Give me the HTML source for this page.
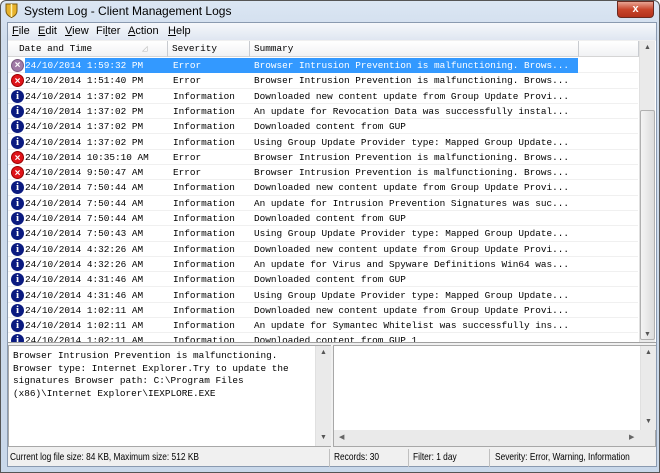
<!DOCTYPE html>
<html><head><meta charset="utf-8">
<style>
*{box-sizing:border-box;margin:0;padding:0}
body{width:660px;height:473px;overflow:hidden;background:#fff;font-family:"Liberation Sans",sans-serif;position:relative}
.frame{position:absolute;left:0;top:0;width:660px;height:473px;background:linear-gradient(#dbe6f3,#cfdcec 40px,#c9d8ea);border:1px solid #555;border-radius:6px 6px 0 0}
.title{position:absolute;left:24px;top:4px;font-size:12px;color:#000}
.close{position:absolute;left:617px;top:1px;width:37px;height:17px;border:1px solid #6b2a20;border-radius:0 0 4px 4px;background:linear-gradient(#e8a493,#c9452b 50%,#b3321c);color:#fff;font-size:11px;font-weight:bold;text-align:center;line-height:15px}
.inner{position:absolute;left:7px;top:22px;width:650px;height:445px;background:#f0f0f0;border:1px solid #8a9ab0}
.menu{position:absolute;left:8px;top:23px;width:648px;height:17px;background:linear-gradient(#f6f8fb,#dfe6f1);font-size:11px}
.menu span{position:absolute;top:2px}
.menu u{text-decoration:underline}
.list{position:absolute;left:8px;top:41px;width:648px;height:302px;background:#fff;overflow:hidden;border-bottom:1px solid #a0a0a0}
.hdr{position:absolute;top:0;height:16px;background:linear-gradient(#fff,#f1f2f4);border-right:1px solid #c8cbd0;border-bottom:1px solid #d5d5d5;font-family:"Liberation Mono",monospace;font-size:9.4px;line-height:16px;padding-left:4px}
.row{position:absolute;left:0;width:630px;height:15.3px;font-family:"Liberation Mono",monospace;font-size:9.4px;line-height:15px;border-bottom:1px solid #f0f0f0}
.row span{position:absolute;top:0;white-space:nowrap}
.sel .hl{position:absolute;left:17px;top:0;width:553px;height:15px;background:#3399ff}
.sel span{color:#fff}
.ic{position:absolute;left:3px;top:1px;width:13px;height:13px;border-radius:50%;color:#fff;font-weight:bold;text-align:center;font-family:"Liberation Serif",serif}
.i{background:#0a1a80;font-size:11px;line-height:13px}
.e{background:#e0141a;font-size:10px;line-height:13px;font-family:"Liberation Sans",sans-serif;border:1px solid #900}
.g{background:#a07aa6;font-size:10px;line-height:12px;font-family:"Liberation Sans",sans-serif;border:1px solid #7a5a80}
.vs{position:absolute;width:16px;background:#eaeaea;border-left:1px solid #e0e0e0}
.arr{position:absolute;left:4px;font-size:7px;color:#555}
.pane{position:absolute;top:345px;height:102px;background:#fff;border:1px solid #a8a8a8}
.det{position:absolute;left:4px;top:4px;font-family:"Liberation Mono",monospace;font-size:9.4px;line-height:12.6px;white-space:pre}
.status{position:absolute;top:449px;height:18px;font-size:10.2px;line-height:18px;border-right:1px solid #c0c0c0;padding-left:2px;color:#000;white-space:nowrap;overflow:hidden}
.status b{font-weight:normal;display:inline-block;transform:scaleX(.82);transform-origin:left}
</style></head><body>
<div class="frame"></div>
<svg style="position:absolute;left:5px;top:3px" width="13" height="15" viewBox="0 0 13 15"><path d="M1 1 L12 1 L12 8 Q12 12 6.5 14.5 Q1 12 1 8 Z" fill="#e7b22b" stroke="#7a5a10"/><path d="M6.5 1 V14" stroke="#fff3b0" stroke-width="1.5"/></svg>
<div class="title">System Log - Client Management Logs</div>
<div class="close">x</div>
<div class="inner"></div>
<div class="menu">
<span style="left:4px"><u>F</u>ile</span><span style="left:30px"><u>E</u>dit</span><span style="left:57px"><u>V</u>iew</span><span style="left:88px">Fi<u>l</u>ter</span><span style="left:120px"><u>A</u>ction</span><span style="left:160px"><u>H</u>elp</span>
</div>
<div class="list">
<div class="hdr" style="left:0;width:160px;padding-left:11px">Date and Time<span style="position:absolute;left:134px;top:0;color:#bbb">◿</span></div>
<div class="hdr" style="left:160px;width:82px">Severity</div>
<div class="hdr" style="left:242px;width:329px">Summary</div>
<div class="hdr" style="left:571px;width:60px"></div>
<div id="rows"></div>
<div class="vs" style="left:631px;top:0;height:302px"><div class="arr" style="top:3px">▲</div><div style="position:absolute;left:0;top:69px;width:15px;height:230px;background:linear-gradient(90deg,#f4f4f4,#dcdcdc);border:1px solid #b0b0b0;border-radius:2px"></div><div class="arr" style="top:290px">▼</div></div>
</div>
<div class="pane" style="left:8px;width:323px"><div class="det">Browser Intrusion Prevention is malfunctioning.
Browser type: Internet Explorer.Try to update the
signatures Browser path: C:\Program Files
(x86)\Internet Explorer\IEXPLORE.EXE</div>
<div class="vs" style="left:306px;top:0;height:100px"><div class="arr" style="top:3px">▲</div><div class="arr" style="top:88px">▼</div></div></div>
<div class="pane" style="left:333px;width:323px">
<div class="vs" style="left:306px;top:0;height:84px"><div class="arr" style="top:3px">▲</div><div class="arr" style="top:72px">▼</div></div>
<div style="position:absolute;left:0;top:84px;width:321px;height:16px;background:#eaeaea;font-size:7px;color:#666;line-height:16px"><span style="position:absolute;left:5px">◀</span><span style="position:absolute;left:295px">▶</span></div>
</div>
<div class="status" style="left:8px;width:322px"><b>Current log file size: 84 KB, Maximum size: 512 KB</b></div>
<div class="status" style="left:330px;width:79px;padding-left:4px"><b>Records: 30</b></div>
<div class="status" style="left:409px;width:81px;padding-left:4px"><b>Filter: 1 day</b></div>
<div class="status" style="left:490px;width:166px;padding-left:5px;border:none"><b>Severity: Error, Warning, Information</b></div>
<script>
var d=[["g","1:59:32 PM","Error","Browser Intrusion Prevention is malfunctioning. Brows..."],
["e","1:51:40 PM","Error","Browser Intrusion Prevention is malfunctioning. Brows..."],
["i","1:37:02 PM","Information","Downloaded new content update from Group Update Provi..."],
["i","1:37:02 PM","Information","An update for Revocation Data was successfully instal..."],
["i","1:37:02 PM","Information","Downloaded content from GUP"],
["i","1:37:02 PM","Information","Using Group Update Provider type: Mapped Group Update..."],
["e","10:35:10 AM","Error","Browser Intrusion Prevention is malfunctioning. Brows..."],
["e","9:50:47 AM","Error","Browser Intrusion Prevention is malfunctioning. Brows..."],
["i","7:50:44 AM","Information","Downloaded new content update from Group Update Provi..."],
["i","7:50:44 AM","Information","An update for Intrusion Prevention Signatures was suc..."],
["i","7:50:44 AM","Information","Downloaded content from GUP"],
["i","7:50:43 AM","Information","Using Group Update Provider type: Mapped Group Update..."],
["i","4:32:26 AM","Information","Downloaded new content update from Group Update Provi..."],
["i","4:32:26 AM","Information","An update for Virus and Spyware Definitions Win64 was..."],
["i","4:31:46 AM","Information","Downloaded content from GUP"],
["i","4:31:46 AM","Information","Using Group Update Provider type: Mapped Group Update..."],
["i","1:02:11 AM","Information","Downloaded new content update from Group Update Provi..."],
["i","1:02:11 AM","Information","An update for Symantec Whitelist was successfully ins..."],
["i","1:02:11 AM","Information","Downloaded content from GUP 1"]];
var h="";d.forEach(function(r,k){var t=17+k*15.3;
h+='<div class="row'+(k==0?' sel':'')+'" style="top:'+t+'px">'+(k==0?'<div class="hl"></div>':'')+
'<div class="ic '+r[0]+'">'+(r[0]=="i"?"i":"×")+'</div><span style="left:17px">24/10/2014 '+r[1]+'</span><span style="left:165px">'+r[2]+'</span><span style="left:246px">'+r[3]+'</span></div>';});
document.getElementById("rows").innerHTML=h;
</script>
</body></html>
